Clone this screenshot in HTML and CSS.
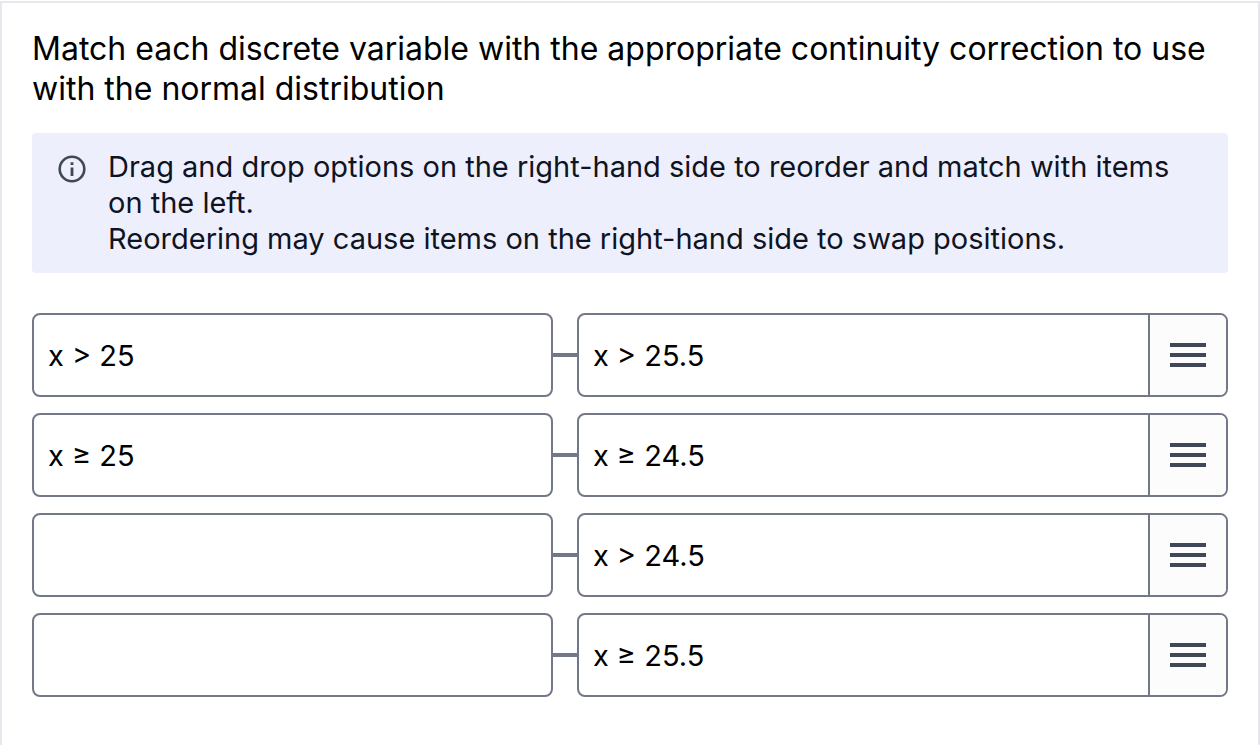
FILE: index.html
```
<!DOCTYPE html>
<html lang="en">
<head>
    <meta charset="UTF-8">
    <meta name="viewport" content="width=device-width, initial-scale=1.0">
    <title>Continuity Correction</title>
    <link rel="stylesheet" href="styles.css">
</head>
<body>
    <main class="question">
        <h1 class="prompt">Match each discrete variable with the appropriate continuity correction to use with the normal distribution</h1>

        <div class="info-box">
            <svg class="info-icon" viewBox="0 0 28 28" aria-hidden="true">
                <circle cx="14" cy="14" r="12.3" fill="none" stroke="currentColor" stroke-width="2.6"/>
                <path d="M14 12.6v8.4M14 7.2v2.8" stroke="currentColor" stroke-width="2.8"/>
            </svg>
            <div class="info-text">
                <p>Drag and drop options on the right-hand side to reorder and match with items on the left.</p>
                <p>Reordering may cause items on the right-hand side to swap positions.</p>
            </div>
        </div>

        <ul class="match-list">
            <li class="match-row">
                <div class="item">x &gt; 25</div>
                <span class="connector"></span>
                <div class="option">
                    <span class="option-text">x &gt; 25.5</span>
                    <button class="handle" type="button" aria-label="Move x &gt; 25.5">
                        <svg viewBox="0 0 36 24" aria-hidden="true"><path d="M0 2h36M0 12h36M0 22h36"/></svg>
                    </button>
                </div>
            </li>
            <li class="match-row">
                <div class="item">x ≥ 25</div>
                <span class="connector"></span>
                <div class="option">
                    <span class="option-text">x ≥ 24.5</span>
                    <button class="handle" type="button" aria-label="Move x ≥ 24.5">
                        <svg viewBox="0 0 36 24" aria-hidden="true"><path d="M0 2h36M0 12h36M0 22h36"/></svg>
                    </button>
                </div>
            </li>
            <li class="match-row">
                <div class="item"></div>
                <span class="connector"></span>
                <div class="option">
                    <span class="option-text">x &gt; 24.5</span>
                    <button class="handle" type="button" aria-label="Move x &gt; 24.5">
                        <svg viewBox="0 0 36 24" aria-hidden="true"><path d="M0 2h36M0 12h36M0 22h36"/></svg>
                    </button>
                </div>
            </li>
            <li class="match-row">
                <div class="item"></div>
                <span class="connector"></span>
                <div class="option">
                    <span class="option-text">x ≥ 25.5</span>
                    <button class="handle" type="button" aria-label="Move x ≥ 25.5">
                        <svg viewBox="0 0 36 24" aria-hidden="true"><path d="M0 2h36M0 12h36M0 22h36"/></svg>
                    </button>
                </div>
            </li>
        </ul>
    </main>
</body>
</html>
```
FILE: styles.css
```
* {
    margin: 0;
    padding: 0;
    box-sizing: border-box;
}

body {
    display: flex;
    min-height: 100vh;
    padding-top: 1px;
    font-family: Inter, sans-serif;
    background-color: #fff;
    color: #000;
}

/* Question card */
.question {
    flex: 1;
    padding: 26px 30px;
    border: 2px solid #e7e8ee;
    border-bottom: none;
}

.prompt {
    font-size: 32px;
    font-weight: 400;
    line-height: 40px;
}

/* Instructions */
.info-box {
    display: flex;
    gap: 22px;
    margin-top: 24px;
    padding: 16px 26px;
    background-color: #eeeffc;
    border-radius: 4px;
    color: #0f1423;
}

.info-icon {
    flex: none;
    width: 28px;
    height: 28px;
    margin-top: 6px;
    color: #404757;
}

.info-text {
    font-size: 29px;
    line-height: 36px;
}

/* Matching rows */
.match-list {
    display: flex;
    flex-direction: column;
    gap: 16px;
    margin-top: 40px;
    list-style: none;
    font-size: 29px;
}

.match-row {
    display: grid;
    grid-template-columns: 4fr 24px 5fr;
    align-items: center;
}

.item,
.option {
    height: 84px;
    border: 2px solid #737889;
    border-radius: 8px;
}

.item {
    display: flex;
    align-items: center;
    padding: 0 14px;
}

.connector {
    height: 4px;
    background-color: #737889;
}

.option {
    display: flex;
    align-items: stretch;
    overflow: hidden;
}

.option-text {
    display: flex;
    flex: 1;
    align-items: center;
    padding: 0 14px;
}

.handle {
    display: flex;
    align-items: center;
    justify-content: center;
    width: 78px;
    background-color: #fcfcfd;
    border: none;
    border-left: 2px solid #737889;
    cursor: grab;
}

.handle svg {
    width: 36px;
    height: 24px;
    stroke: #404757;
    stroke-width: 4;
}
```
